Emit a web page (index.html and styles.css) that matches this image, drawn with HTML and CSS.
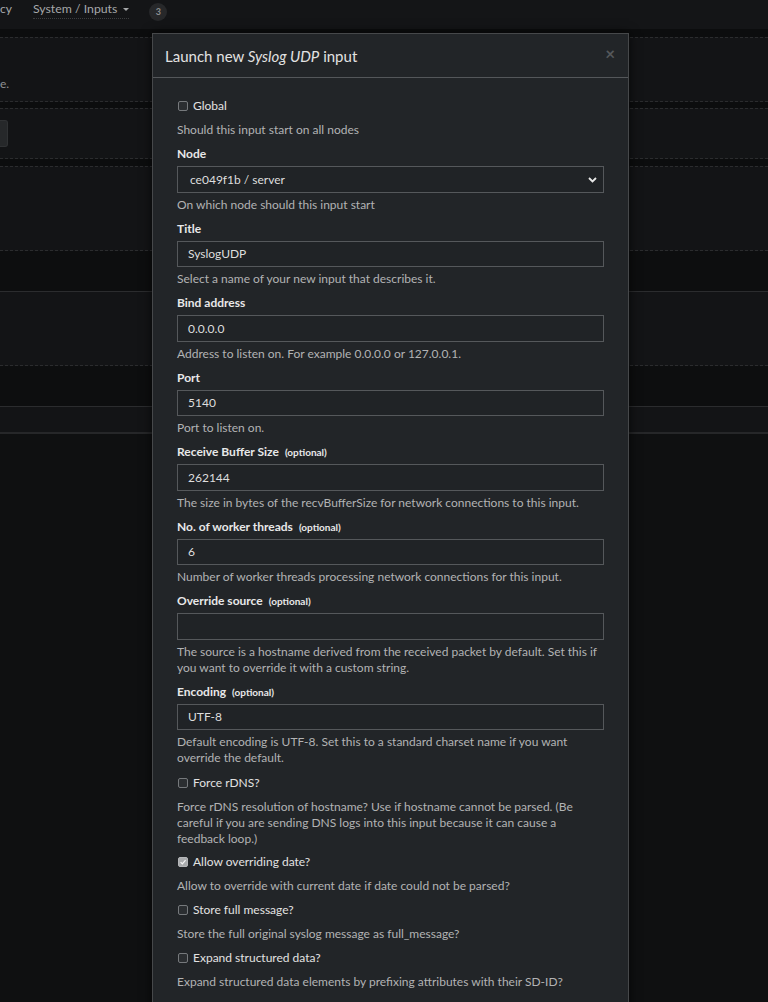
FILE: index.html
```html
<!DOCTYPE html>
<html lang="en">
<head>
<meta charset="utf-8">
<title>System / Inputs</title>
<link rel="stylesheet" href="styles.css">
</head>
<body>
<div class="page">
  <nav class="topnav">
    <span class="nav-item nav-cut">cy</span>
    <span class="nav-item nav-active">System / Inputs<span class="caret"></span></span>
    <span class="badge">3</span>
  </nav>
  <div class="gap gap-a"></div>
  <section class="panel panel-1"><span class="cut-text">e.</span></section>
  <div class="gap gap-b"></div>
  <section class="panel panel-2"><span class="cut-btn"></span></section>
  <div class="gap gap-c"></div>
  <section class="panel panel-3"></section>
  <div class="strip"></div>
  <section class="panel panel-4"></section>
  <div class="strip"></div>
  <section class="panel panel-5"></section>
  <div class="rest"></div>
</div>

<div class="modal">
  <div class="modal-header">
    <h4 class="modal-title">Launch new <em>Syslog UDP</em> input</h4>
    <span class="close">&times;</span>
  </div>
  <div class="modal-body">
    <div class="check-field">
      <div class="check-row"><span class="cbox"></span>Global</div>
      <div class="help">Should this input start on all nodes</div>
    </div>

    <div class="field">
      <div class="label">Node</div>
      <div class="select-wrap">
        <div class="input select">ce049f1b / server</div>
        <svg class="chev" width="9" height="6" viewBox="0 0 9 6"><path d="M1 1 L4.5 4.5 L8 1" fill="none" stroke="#e8e8e8" stroke-width="1.8"/></svg>
      </div>
      <div class="help">On which node should this input start</div>
    </div>

    <div class="field">
      <div class="label">Title</div>
      <div class="input">SyslogUDP</div>
      <div class="help">Select a name of your new input that describes it.</div>
    </div>

    <div class="field">
      <div class="label">Bind address</div>
      <div class="input">0.0.0.0</div>
      <div class="help">Address to listen on. For example 0.0.0.0 or 127.0.0.1.</div>
    </div>

    <div class="field">
      <div class="label">Port</div>
      <div class="input">5140</div>
      <div class="help">Port to listen on.</div>
    </div>

    <div class="field">
      <div class="label">Receive Buffer Size <span class="opt">(optional)</span></div>
      <div class="input">262144</div>
      <div class="help">The size in bytes of the recvBufferSize for network connections to this input.</div>
    </div>

    <div class="field">
      <div class="label">No. of worker threads <span class="opt">(optional)</span></div>
      <div class="input">6</div>
      <div class="help">Number of worker threads processing network connections for this input.</div>
    </div>

    <div class="field">
      <div class="label">Override source <span class="opt">(optional)</span></div>
      <div class="input"></div>
      <div class="help">The source is a hostname derived from the received packet by default. Set this if you want to override it with a custom string.</div>
    </div>

    <div class="field field-last">
      <div class="label">Encoding <span class="opt">(optional)</span></div>
      <div class="input">UTF-8</div>
      <div class="help">Default encoding is UTF-8. Set this to a standard charset name if you want override the default.</div>
    </div>

    <div class="check-field check-tight">
      <div class="check-row"><span class="cbox"></span>Force rDNS?</div>
      <div class="help">Force rDNS resolution of hostname? Use if hostname cannot be parsed. (Be careful if you are sending DNS logs into this input because it can cause a feedback loop.)</div>
    </div>

    <div class="check-field">
      <div class="check-row"><span class="cbox checked"><svg width="10" height="10" viewBox="0 0 10 10"><path d="M2 5.2 L4.2 7.4 L8.2 2.6" fill="none" stroke="#f4f4f4" stroke-width="1.6"/></svg></span>Allow overriding date?</div>
      <div class="help">Allow to override with current date if date could not be parsed?</div>
    </div>

    <div class="check-field">
      <div class="check-row"><span class="cbox"></span>Store full message?</div>
      <div class="help">Store the full original syslog message as full_message?</div>
    </div>

    <div class="check-field">
      <div class="check-row"><span class="cbox"></span>Expand structured data?</div>
      <div class="help">Expand structured data elements by prefixing attributes with their SD-ID?</div>
    </div>
  </div>
  <div class="modal-footer"></div>
</div>
</body>
</html>
```

FILE: styles.css
```css
html, body {
  margin: 0;
  padding: 0;
}
body {
  width: 768px;
  height: 1002px;
  overflow: hidden;
  position: relative;
  background: #0f1011;
  font-family: Lato, "Noto Sans", sans-serif;
}

/* background page */
.topnav {
  height: 29px;
  box-sizing: border-box;
  padding-top: 2px;
  background: #141517;
  display: flex;
  align-items: flex-start;
  font-size: 12px;
  line-height: 14px;
  color: #a6a8aa;
}
.nav-cut { margin-left: 0; }
.nav-active {
  margin-left: 21px;
  padding-bottom: 2px;
  border-bottom: 1px dotted #3c3d3f;
  display: flex;
  align-items: center;
  font-size: 12.3px;
}
.caret {
  display: inline-block;
  width: 0;
  height: 0;
  margin-left: 6px;
  border-top: 3px solid #a6a8aa;
  border-left: 3px solid transparent;
  border-right: 3px solid transparent;
}
.badge {
  margin-left: 20px;
  margin-top: 1px;
  width: 18px;
  height: 18px;
  border-radius: 50%;
  background: #27282a;
  color: #8c8e90;
  font-size: 9px;
  font-weight: 700;
  display: flex;
  align-items: center;
  justify-content: center;
}
.gap { background: #0c0d0e; }
.gap-a { height: 8px; }
.gap-b { height: 6px; }
.gap-c { height: 7px; }
.strip { height: 40px; background: #0d0e0f; }
.panel {
  background: #131416;
  box-sizing: border-box;
  border-top: 1px dashed #2b2c2e;
  border-bottom: 1px dashed #2b2c2e;
}
.panel-1 { height: 65px; padding-top: 39px; }
.panel-2 { height: 51px; padding-top: 11px; }
.panel-3 { height: 85px; }
.panel-4 { height: 75px; border-top-style: solid; }
.panel-5 { height: 28px; border-top-style: solid; border-bottom: 2px solid #262729; }
.cut-text {
  display: block;
  font-size: 12px;
  line-height: 14px;
  color: #8e9092;
  margin-left: 0;
}
.cut-btn {
  display: block;
  width: 8px;
  height: 27px;
  background: #26282a;
  border: 1px solid #303234;
  border-left: none;
  border-radius: 0 3px 3px 0;
  box-sizing: border-box;
}

/* modal */
.modal {
  position: absolute;
  left: 152px;
  top: 33px;
  width: 475px;
  background: #222528;
  border: 1px solid #46484a;
  box-shadow: 0 0 10px rgba(0, 0, 0, 0.7);
  color: #dcdcdc;
}
.modal-header {
  height: 43px;
  display: flex;
  align-items: center;
  justify-content: space-between;
  padding: 0 13px 0 12px;
  border-bottom: 1px solid #54575a;
}
.modal-title {
  margin: 0;
  font-size: 15px;
  font-weight: 400;
  color: #e2e2e2;
}
.modal-title em { font-style: italic; }
.close {
  font-size: 17px;
  font-weight: 700;
  color: #55585b;
  line-height: 1;
  margin-top: -4px;
}
.modal-body {
  padding: 20px 24px 10px;
}
.modal-footer {
  height: 40px;
  border-top: 2px solid #3a3c3e;
}

.field { margin-bottom: 8px; }
.field-last { margin-bottom: 9px; }
.check-field { margin-bottom: 8px; }
.check-tight { margin-bottom: 7px; }
.label {
  display: flex;
  align-items: baseline;
  gap: 6px;
  font-size: 12px;
  font-weight: 700;
  line-height: 16px;
  color: #e8e8e8;
  margin-bottom: 4px;
}
.opt { font-size: 10px; }
.input {
  box-sizing: border-box;
  height: 26.5px;
  border: 1px solid #55585b;
  background: #202326;
  padding: 0 10px;
  display: flex;
  align-items: center;
  font-size: 12px;
  color: #dedede;
}
.select-wrap { position: relative; }
.select { padding-left: 12px; }
.chev {
  position: absolute;
  right: 7px;
  top: 11px;
}
.help {
  margin-top: 4px;
  font-size: 12px;
  line-height: 16px;
  color: #b2b3b4;
}
.check-row {
  display: flex;
  align-items: center;
  gap: 5px;
  font-size: 12px;
  line-height: 16px;
  color: #e2e2e2;
  padding-left: 1px;
}
.check-field .help { margin-top: 8px; }
.cbox {
  box-sizing: border-box;
  width: 10px;
  height: 10px;
  border: 1px solid #76797c;
  border-radius: 2px;
  background: #2b2e31;
  display: flex;
  align-items: center;
  justify-content: center;
}
.cbox.checked {
  background: #a9abad;
  border-color: #b5b7b9;
}
.cbox svg { display: block; }
```
